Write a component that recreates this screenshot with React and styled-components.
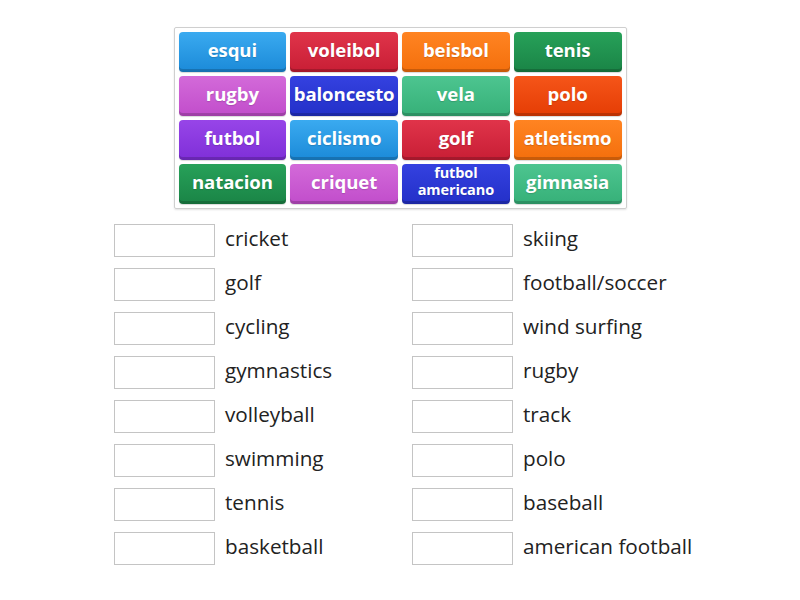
import React from "react";
import styled, { createGlobalStyle } from "styled-components";

const GlobalStyle = createGlobalStyle`
  body {
    margin: 0;
    background: #fff;
    font-family: "Open Sans", "Liberation Sans", sans-serif;
  }
`;

const Page = styled.div`
  width: 800px;
  height: 600px;
  overflow: hidden;
  padding-top: 27px;
  box-sizing: border-box;
`;

const Bank = styled.div`
  width: 453px;
  margin: 0 auto;
  box-sizing: border-box;
  padding: 4px;
  border: 1px solid #cfcfcf;
  border-radius: 2px;
  box-shadow: 0 1px 2px rgba(0, 0, 0, 0.12);
  display: grid;
  grid-template-columns: repeat(4, 1fr);
  grid-auto-rows: 40px;
  gap: 4px;
`;

const Tile = styled.div`
  display: flex;
  flex-direction: column;
  align-items: center;
  justify-content: center;
  text-align: center;
  border-radius: 4px;
  color: #fff;
  font-weight: 700;
  font-size: 18.6px;
  line-height: 20px;
  padding-bottom: 4px;
  box-sizing: border-box;
  background: linear-gradient(${(p) => p.top}, ${(p) => p.bottom});
  box-shadow: inset 0 -3px 0 rgba(0, 0, 0, 0.18), 0 1px 1px rgba(0, 0, 0, 0.15);
  text-shadow: 0 1px 1px rgba(0, 0, 0, 0.15);
  white-space: nowrap;
  letter-spacing: -0.1px;
`;

const SmallLine = styled.span`
  display: block;
  font-size: 14.5px;
  line-height: 16px;
  height: 17px;
`;

const Answers = styled.div`
  margin-top: 15px;
  padding-left: 114px;
  display: grid;
  grid-template-columns: 298px 298px;
  grid-auto-flow: column;
  grid-template-rows: repeat(8, 33px);
  row-gap: 11px;
`;

const Row = styled.div`
  display: flex;
  align-items: flex-start;
  gap: 10px;
`;

const Slot = styled.div`
  width: 101px;
  height: 33px;
  box-sizing: border-box;
  border: 1px solid #c4c4c4;
  background: #fff;
  flex: none;
`;

const Label = styled.div`
  font-size: 20.7px;
  line-height: 28px;
  color: #222;
  white-space: nowrap;
`;

const colors = {
  blue: ["#3aaaf0", "#1b8ad8"],
  red: ["#e0344a", "#c81e35"],
  orange: ["#ff8422", "#f46f0c"],
  green: ["#27a159", "#1a8446"],
  magenta: ["#d36ad9", "#c14dcb"],
  navy: ["#3441e0", "#2330c8"],
  teal: ["#4dc590", "#36b078"],
  redorange: ["#f55519", "#e53d05"],
  purple: ["#9745e8", "#7f2fd8"],
};

const tiles = [
  ["esqui", "blue"],
  ["voleibol", "red"],
  ["beisbol", "orange"],
  ["tenis", "green"],
  ["rugby", "magenta"],
  ["baloncesto", "navy"],
  ["vela", "teal"],
  ["polo", "redorange"],
  ["futbol", "purple"],
  ["ciclismo", "blue"],
  ["golf", "red"],
  ["atletismo", "orange"],
  ["natacion", "green"],
  ["criquet", "magenta"],
  ["futbol americano", "navy"],
  ["gimnasia", "teal"],
];

const words = [
  "cricket",
  "golf",
  "cycling",
  "gymnastics",
  "volleyball",
  "swimming",
  "tennis",
  "basketball",
  "skiing",
  "football/soccer",
  "wind surfing",
  "rugby",
  "track",
  "polo",
  "baseball",
  "american football",
];

export default function App() {
  return (
    <Page>
      <GlobalStyle />
      <Bank>
        {tiles.map(([text, c]) => (
          <Tile key={text} top={colors[c][0]} bottom={colors[c][1]}>
            {text.includes(" ")
              ? text.split(" ").map((part) => <SmallLine key={part}>{part}</SmallLine>)
              : text}
          </Tile>
        ))}
      </Bank>
      <Answers>
        {words.map((w) => (
          <Row key={w}>
            <Slot />
            <Label>{w}</Label>
          </Row>
        ))}
      </Answers>
    </Page>
  );
}
